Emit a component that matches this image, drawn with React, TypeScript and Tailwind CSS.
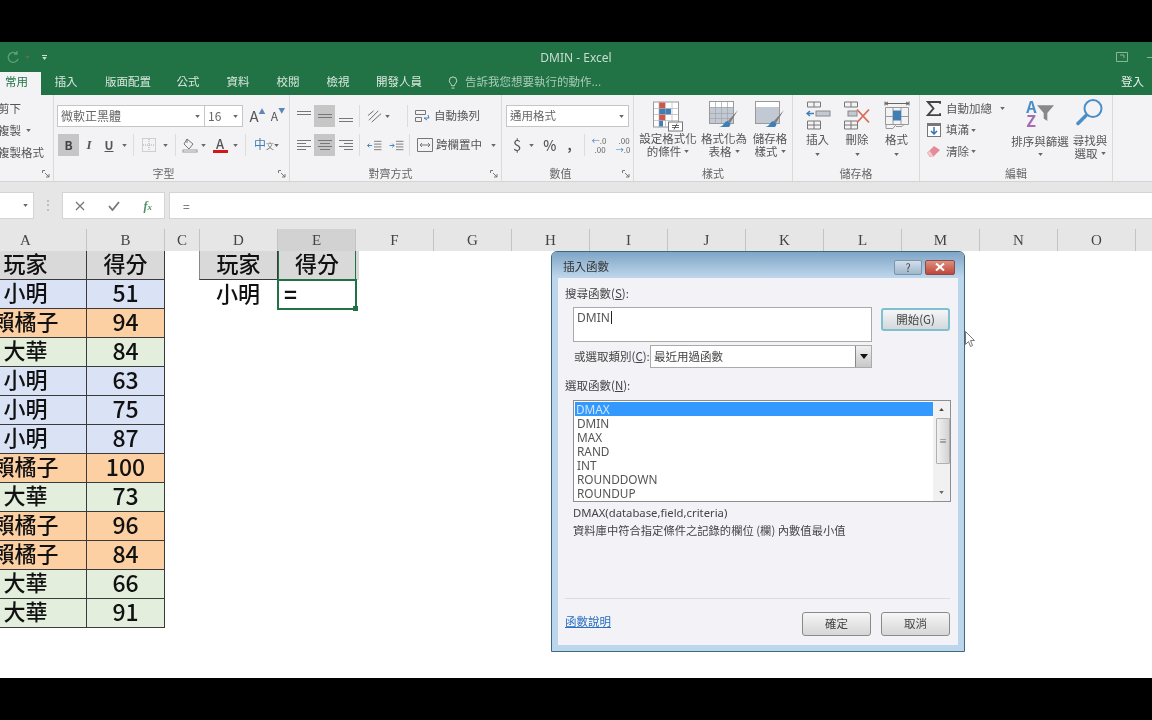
import type { ReactNode } from "react";

const CJK = "font-['Noto_Sans_CJK_TC','Noto_Sans','Liberation_Sans',sans-serif]";

const tabs = [
  { label: "插入", w: "w-[50px]" },
  { label: "版面配置", w: "w-[74px]" },
  { label: "公式", w: "w-[46px]" },
  { label: "資料", w: "w-[54px]" },
  { label: "校閱", w: "w-[46px]" },
  { label: "檢視", w: "w-[54px]" },
  { label: "開發人員", w: "w-[68px]" },
];

const columns = [
  { name: "A", w: "w-[122px]" },
  { name: "B", w: "w-[78px]" },
  { name: "C", w: "w-[35px]" },
  { name: "D", w: "w-[78px]" },
  { name: "E", w: "w-[78px]" },
  { name: "F", w: "w-[78px]" },
  { name: "G", w: "w-[78px]" },
  { name: "H", w: "w-[78px]" },
  { name: "I", w: "w-[78px]" },
  { name: "J", w: "w-[78px]" },
  { name: "K", w: "w-[78px]" },
  { name: "L", w: "w-[78px]" },
  { name: "M", w: "w-[78px]" },
  { name: "N", w: "w-[78px]" },
  { name: "O", w: "w-[78px]" },
  { name: "", w: "w-[78px]" },
];

const rows: [string, number][] = [
  ["小明", 51],
  ["賴橘子", 94],
  ["大華", 84],
  ["小明", 63],
  ["小明", 75],
  ["小明", 87],
  ["賴橘子", 100],
  ["大華", 73],
  ["賴橘子", 96],
  ["賴橘子", 84],
  ["大華", 66],
  ["大華", 91],
];

const rowColor: Record<string, string> = {
  小明: "bg-[#dae3f5]",
  賴橘子: "bg-[#fcd0a2]",
  大華: "bg-[#e3eedc]",
};

const functions = ["DMIN", "MAX", "RAND", "INT", "ROUNDDOWN", "ROUNDUP"];

function Caret({ className = "" }: { className?: string }) {
  return (
    <svg viewBox="0 0 6 4" className={`h-[3px] w-[5px] shrink-0 fill-[#666] ${className}`}>
      <path d="M0 0h6L3 4z" />
    </svg>
  );
}

function Sep() {
  return <div className="h-[22px] w-px shrink-0 bg-[#dcdcdc]" />;
}

function Launcher() {
  return (
    <svg viewBox="0 0 8 8" className="absolute bottom-[3px] right-[3px] h-2 w-2 fill-none stroke-[#777]">
      <path d="M.5 3V.5H3M3 3l4 4M4 7h3V4" />
    </svg>
  );
}

function Group({
  w,
  label,
  labelClass = "",
  launcher,
  children,
}: {
  w: string;
  label: string;
  labelClass?: string;
  launcher?: boolean;
  children?: ReactNode;
}) {
  return (
    <div className={`relative flex h-full shrink-0 flex-col border-r border-[#dadada] ${w}`}>
      <div className="h-[70px] overflow-hidden">{children}</div>
      <div className={`text-center text-[11px] leading-[16px] text-[#666] ${labelClass}`}>{label}</div>
      {launcher && <Launcher />}
    </div>
  );
}

function AlignIcon({ lines, active }: { lines: string; active?: boolean }) {
  return (
    <div className={`flex h-[22px] w-[21px] shrink-0 items-center justify-center ${active ? "bg-[#c6c6c6]" : ""}`}>
      <svg viewBox="0 0 14 14" className="h-[14px] w-[14px] fill-none stroke-[#777]">
        <path d={lines} />
      </svg>
    </div>
  );
}

function BigIcon({ children, top, bottom, w }: { children: ReactNode; top: string; bottom: string; w: string }) {
  return (
    <div className={`flex shrink-0 flex-col items-center ${w}`}>
      <div className="flex h-[32px] items-center justify-center">{children}</div>
      <div className="whitespace-nowrap text-center text-[11.5px] leading-[13px] text-[#555]">
        <div>{top}</div>
        <div className="flex h-[13px] items-center justify-center gap-[3px]">
          {bottom}
          <Caret />
        </div>
      </div>
    </div>
  );
}

function CellStyleGrid({ fill }: { fill: boolean }) {
  return (
    <svg viewBox="0 0 30 30" className="h-[30px] w-[30px] fill-none">
      <rect x=".5" y=".5" width="24" height="22" fill="#fff" stroke="#999" />
      <rect x="1" y="6" width="23" height="16" fill="#c3c9d3" />
      {fill && <path d="M6.5 1v22M12.5 1v22M18.5 1v22M1 6.5h24M1 12.5h24M1 17.5h24" stroke="#a0a4aa" strokeWidth=".7" />}
      <path d="M29 9 19 20l2 2z" fill="#7d7d7d" />
      <path d="M19 20c-3 0-4 3-5 4-1 1-3 2-4 2h10c1-1 2-3 1-4z" fill="#3f7fb5" />
    </svg>
  );
}

function SmallCells() {
  return (
    <g className="fill-none stroke-[#777]">
      <path d="M2.5 1.5h13v5h-13zM9 1.5v5M2.5 20.5h13v8h-13zM9 20.5v8M2.5 24.5h13" />
    </g>
  );
}

function Ribbon() {
  return (
    <div className="flex h-[87px] shrink-0 border-b border-[#d4d4d4] bg-[#f3f3f5]">
      <Group w="w-[54px]" label="" launcher>
        <div className="-ml-[2px] flex flex-col whitespace-nowrap pt-[2px] text-[11.5px] leading-[22px] text-[#555]">
          <div>剪下</div>
          <div className="flex items-center gap-[5px]">
            複製
            <Caret />
          </div>
          <div>複製格式</div>
        </div>
      </Group>
      <Group w="w-[236px]" label="字型" labelClass="pr-[16px]" launcher>
        <div className="flex flex-col gap-[7px] pt-[10px]">
          <div className="flex h-[22px] items-center pl-[3px]">
            <div className="flex h-[22px] w-[148px] shrink-0 items-center justify-between border border-[#c6c6c6] bg-white pl-[3px] pr-[4px] text-[12px] text-[#666]">
              微軟正黑體
              <Caret />
            </div>
            <div className="flex h-[22px] w-[38px] shrink-0 items-center justify-between border border-l-0 border-[#c6c6c6] bg-white pl-[3px] pr-[4px] text-[12px] text-[#666]">
              16
              <Caret />
            </div>
            <div className="ml-[4px] flex w-[21px] shrink-0 items-start justify-center text-[15px] leading-[18px] text-[#555]">
              A<span className="text-[7px] leading-[8px] text-[#5b87b8]">▲</span>
            </div>
            <div className="flex w-[20px] shrink-0 items-start justify-center text-[12px] leading-[20px] text-[#555]">
              A<span className="text-[7px] leading-[8px] text-[#5b87b8]">▼</span>
            </div>
          </div>
          <div className="flex h-[22px] items-center pl-[4px]">
            <div className="flex h-[22px] w-[21px] items-center justify-center bg-[#c6c6c6] text-[12px] font-bold text-[#444]">B</div>
            <div className="flex w-[20px] justify-center font-['Liberation_Serif',serif] text-[13px] font-bold italic text-[#555]">I</div>
            <div className="flex w-[20px] justify-center text-[12px] font-bold text-[#555] underline">U</div>
            <Caret className="ml-[3px]" />
            <div className="ml-[6px]"><Sep /></div>
            <svg viewBox="0 0 14 14" className="ml-[8px] h-[14px] w-[14px] fill-none stroke-[#aaa] [stroke-dasharray:1_1]">
              <path d="M.5.5h13v13H.5zM7 1v12M1 7h12" />
            </svg>
            <Caret className="ml-[7px]" />
            <div className="ml-[7px]"><Sep /></div>
            <svg viewBox="0 0 16 16" className="ml-[6px] h-[16px] w-[16px] fill-none stroke-[#777]">
              <path d="M5 2l6 5-4 5-5-5zM5 2v4" />
              <rect x="1" y="13" width="14" height="2" fill="#fff" stroke="#999" />
            </svg>
            <Caret className="ml-[3px]" />
            <div className="ml-[6px] flex w-[16px] flex-col items-center">
              <span className="text-[13px] font-medium leading-[13px] text-[#555]">A</span>
              <span className="h-[3px] w-[15px] bg-[#d01818]" />
            </div>
            <Caret className="ml-[5px]" />
            <div className="ml-[7px]"><Sep /></div>
            <div className="ml-[8px] w-[20px] whitespace-nowrap text-[12px] leading-[16px] text-[#3f7fb5]">
              中<span className="text-[8px] text-[#777]">文</span>
            </div>
            <Caret />
          </div>
        </div>
      </Group>
      <Group w="w-[212px]" label="對齊方式" labelClass="pr-[10px]" launcher>
        <div className="flex flex-col gap-[7px] pt-[10px]">
          <div className="flex h-[22px] items-center pl-[3px]">
            <AlignIcon lines="M0 2.5h14M0 5.5h14" />
            <AlignIcon lines="M0 5.5h14M0 8.5h14" active />
            <AlignIcon lines="M0 9.5h14M0 12.5h14" />
            <div className="ml-[3px]"><Sep /></div>
            <svg viewBox="0 0 16 16" className="ml-[7px] h-[15px] w-[15px] fill-none stroke-[#666]">
              <path d="M2 12 12 2M5 14 15 5M1 7l6-5" />
            </svg>
            <Caret className="ml-[3px]" />
            <div className="ml-[17px]"><Sep /></div>
            <svg viewBox="0 0 16 14" className="ml-[7px] h-[14px] w-[16px] fill-none stroke-[#777]">
              <path d="M.5 1.5h10v4H.5zM.5 8.5h6v4h-6z" />
              <path d="M9 9h5l-1-3M12 11l-3-2" stroke="#3f7fb5" />
            </svg>
            <span className="ml-[3px] whitespace-nowrap text-[11.5px] text-[#555]">自動換列</span>
          </div>
          <div className="flex h-[22px] items-center pl-[3px]">
            <AlignIcon lines="M0 2.5h14M0 5.5h9M0 8.5h14M0 11.5h9" />
            <AlignIcon lines="M0 2.5h14M2 5.5h10M0 8.5h14M2 11.5h10" active />
            <AlignIcon lines="M0 2.5h14M5 5.5h9M0 8.5h14M5 11.5h9" />
            <div className="ml-[3px]"><Sep /></div>
            <svg viewBox="0 0 16 14" className="ml-[6px] h-[13px] w-[16px] fill-none stroke-[#777]">
              <path d="M8 2.5h8M8 5.5h8M8 8.5h8M8 11.5h8" />
              <path d="M6 7H1M3 5 1 7l2 2" stroke="#3f7fb5" />
            </svg>
            <svg viewBox="0 0 16 14" className="ml-[6px] h-[13px] w-[16px] fill-none stroke-[#777]">
              <path d="M8 2.5h8M8 5.5h8M8 8.5h8M8 11.5h8" />
              <path d="M1 7h5M4 5l2 2-2 2" stroke="#3f7fb5" />
            </svg>
            <div className="ml-[5px]"><Sep /></div>
            <svg viewBox="0 0 16 14" className="ml-[7px] h-[14px] w-[16px] fill-none stroke-[#777]">
              <path d="M.5.5h15v13H.5zM3 7h10M5 5 3 7l2 2M11 5l2 2-2 2" />
            </svg>
            <span className="ml-[3px] whitespace-nowrap text-[11.5px] text-[#555]">跨欄置中</span>
            <Caret className="ml-[9px]" />
          </div>
        </div>
      </Group>
      <Group w="w-[132px]" label="數值" labelClass="pr-[14px]" launcher>
        <div className="flex flex-col gap-[7px] pt-[10px]">
          <div className="flex h-[22px] pl-[4px]">
            <div className="flex h-[22px] w-[123px] items-center justify-between border border-[#c6c6c6] bg-white pl-[3px] pr-[4px] text-[11.5px] text-[#666]">
              通用格式
              <Caret />
            </div>
          </div>
          <div className="flex h-[22px] items-center pl-[11px] text-[#555]">
            <span className="text-[15px]">$</span>
            <Caret className="ml-[8px]" />
            <span className="ml-[9px] text-[14px] font-medium">%</span>
            <span className="ml-[11px] text-[13px] font-bold">,</span>
            <div className="ml-[12px]"><Sep /></div>
            <div className="ml-[7px] w-[14px] text-right text-[8px] leading-[9px] text-[#666]">
              <div><span className="text-[#3f7fb5]">←</span>.0</div>
              <div>.00</div>
            </div>
            <div className="ml-[10px] w-[14px] text-right text-[8px] leading-[9px] text-[#666]">
              <div>.00</div>
              <div><span className="text-[#3f7fb5]">→</span>.0</div>
            </div>
          </div>
        </div>
      </Group>
      <Group w="w-[159px]" label="樣式">
        <div className="flex pl-[3px] pt-[5px]">
          <BigIcon w="w-[62px]" top="設定格式化" bottom="的條件">
            <svg viewBox="0 0 30 30" className="h-[31px] w-[30px] fill-none">
              <rect x=".5" y=".5" width="25" height="25" fill="#fff" stroke="#999" />
              <rect x="6" y="1" width="6" height="6" fill="#d0574a" />
              <rect x="6" y="7" width="12" height="6" fill="#3f7fb5" />
              <rect x="6" y="13" width="6" height="6" fill="#d0574a" />
              <rect x="6" y="19" width="4" height="6" fill="#3f7fb5" />
              <path d="M6 1v25M12.5 1v25M19 1v25M1 7h25M1 13h25M1 19h25" stroke="#aaa" strokeWidth=".6" />
              <rect x="15.5" y="20.5" width="14" height="9" fill="#fff" stroke="#777" />
              <path d="M19 24h7M19 26h7M24 22l-3 6" stroke="#444" strokeWidth=".8" />
            </svg>
          </BigIcon>
          <BigIcon w="w-[50px]" top="格式化為" bottom="表格">
            <CellStyleGrid fill />
          </BigIcon>
          <BigIcon w="w-[42px]" top="儲存格" bottom="樣式">
            <CellStyleGrid fill={false} />
          </BigIcon>
        </div>
      </Group>
      <Group w="w-[127px]" label="儲存格">
        <div className="flex pl-[5px] pt-[5px]">
          <div className="flex w-[39px] flex-col items-center">
            <svg viewBox="0 0 26 30" className="h-[31px] w-[26px] fill-none">
              <SmallCells />
              <rect x="11" y="10.5" width="14" height="5" fill="#c3c9d3" stroke="#888" />
              <path d="M2 13h7M5 10.500 2 13l3 2.500" stroke="#3f7fb5" strokeWidth="1.400" />
            </svg>
            <div className="mt-[1px] text-[11.5px] leading-[14px] text-[#555]">插入</div>
            <Caret className="mt-[7px]" />
          </div>
          <div className="flex w-[40px] flex-col items-center">
            <svg viewBox="0 0 30 30" className="h-[31px] w-[30px] fill-none">
              <SmallCells />
              <rect x="6" y="10.5" width="9" height="5" fill="#c3c9d3" stroke="#888" />
              <path d="m15 9 12 13M27 9 15 22" stroke="#d96b57" strokeWidth="1.800" />
            </svg>
            <div className="mt-[1px] text-[11.5px] leading-[14px] text-[#555]">刪除</div>
            <Caret className="mt-[7px]" />
          </div>
          <div className="flex w-[39px] flex-col items-center">
            <svg viewBox="0 0 26 30" className="h-[31px] w-[26px] fill-none">
              <path d="M1 3h24M1 1v4M25 1v4M4 1.500 1 3l3 1.500M22 1.500 25 3l-3 1.500" stroke="#666" />
              <path d="M1.500 7h23v17h-23zM9 7v17M17 7v17M1.500 16h23" stroke="#999" />
              <rect x="9" y="10" width="8" height="10" fill="#3f7fb5" />
              <path d="M2 24v4h7l3-4M12 26h6l2-2" stroke="#999" />
            </svg>
            <div className="mt-[1px] text-[11.5px] leading-[14px] text-[#555]">格式</div>
            <Caret className="mt-[7px]" />
          </div>
        </div>
      </Group>
      <Group w="w-[193px]" label="編輯">
        <div className="flex pt-[3px]">
          <div className="flex w-[91px] shrink-0 flex-col pl-[6px] text-[11.5px] text-[#555]">
            <div className="flex h-[21px] items-center">
              <svg viewBox="0 0 16 16" className="h-[15px] w-[15px] fill-none stroke-[#444]">
                <path d="M15 3V1H2l6 7-6 7h13v-2" strokeWidth="2" />
              </svg>
              <span className="ml-[5px] whitespace-nowrap">自動加總</span>
              <Caret className="ml-[8px]" />
            </div>
            <div className="flex h-[22px] items-center">
              <svg viewBox="0 0 14 14" className="ml-[1px] h-[14px] w-[14px] fill-white stroke-[#777]">
                <rect x=".5" y=".5" width="13" height="13" />
                <path d="M.5.5h13v2H.5z" fill="#777" />
                <path d="M7 4v7M4 8l3 3 3-3" stroke="#2f75b5" strokeWidth="1.500" fill="none" />
              </svg>
              <span className="ml-[5px] whitespace-nowrap">填滿</span>
              <Caret className="ml-[2px]" />
            </div>
            <div className="flex h-[21px] items-center">
              <svg viewBox="0 0 15 13" className="h-[13px] w-[15px]">
                <path d="M1 8 8 1l6 4-7 7H4z" fill="#e58a97" />
                <path d="M1 8l4 4h3L4 6z" fill="#f4c8ce" />
              </svg>
              <span className="ml-[5px] whitespace-nowrap">清除</span>
              <Caret className="ml-[2px]" />
            </div>
          </div>
          <div className="flex w-[58px] shrink-0 flex-col items-center">
            <div className="flex h-[29px] items-center">
              <div className="flex flex-col text-[16px] font-bold leading-[14px]">
                <span className="text-[#4a8ec9]">A</span>
                <span className="text-[#a66cb4]">Z</span>
              </div>
              <svg viewBox="0 0 14 14" className="h-[17px] w-[17px] fill-[#888]">
                <path d="M0 1h14L8.500 7.500V14l-3-2V7.500z" />
              </svg>
            </div>
            <div className="mt-[7px] whitespace-nowrap text-[11.5px] leading-[14px] text-[#555]">排序與篩選</div>
            <Caret className="mt-[5px]" />
          </div>
          <div className="flex w-[42px] shrink-0 flex-col items-center">
            <svg viewBox="0 0 28 28" className="h-[29px] w-[28px] shrink-0 fill-none">
              <circle cx="17" cy="10" r="8.500" stroke="#4a8ec9" strokeWidth="2" />
              <path d="M10 17 2 25" stroke="#4a8ec9" strokeWidth="3.500" strokeLinecap="round" />
            </svg>
            <div className="mt-[7px] whitespace-nowrap text-center text-[11.5px] leading-[13px] text-[#555]">
              尋找與
              <div className="flex items-center justify-center gap-[3px]">
                選取
                <Caret />
              </div>
            </div>
          </div>
        </div>
      </Group>
    </div>
  );
}

function FormulaBar() {
  return (
    <div className="flex h-[47px] shrink-0 gap-[4px] bg-[#e6e6e6] pt-[10px] pb-[10px]">
      <div className="flex h-[27px] w-[34px] shrink-0 items-center justify-end border border-l-0 border-[#d4d4d4] bg-white pr-[5px]">
        <Caret />
      </div>
      <div className="flex w-[20px] shrink-0 justify-center pt-[6px] text-[12px] leading-[12px] text-[#aaa]">⋮</div>
      <div className="flex h-[27px] w-[103px] shrink-0 items-center justify-between border border-[#d4d4d4] bg-white px-[12px]">
        <svg viewBox="0 0 10 10" className="h-[10px] w-[10px] fill-none stroke-[#777]">
          <path d="m1 1 8 8M9 1 1 9" strokeWidth="1.300" />
        </svg>
        <svg viewBox="0 0 12 10" className="h-[10px] w-[12px] fill-none stroke-[#777]">
          <path d="m1 5 3.500 4L11 1" strokeWidth="1.800" />
        </svg>
        <span className="font-['Liberation_Serif',serif] text-[12px] font-bold italic text-[#4f8f6a]">
          f<span className="text-[9px]">x</span>
        </span>
      </div>
      <div className="flex h-[27px] flex-1 items-center border border-r-0 border-[#d4d4d4] bg-white pl-[13px] text-[12px] text-[#555]">=</div>
    </div>
  );
}

function Sheet() {
  const cell = "flex h-[29px] items-center justify-center border-b border-r border-[#3a3a3a]";
  return (
    <div className={`flex flex-1 -ml-[35px] items-start bg-white text-[22px] font-medium text-[#111] ${CJK}`}>
      <div className="w-[200px] shrink-0">
        <div className="flex bg-[#d9d9d9]">
          <div className={`${cell} w-[122px] pb-[5px]`}>玩家</div>
          <div className={`${cell} w-[78px] pb-[5px]`}>得分</div>
        </div>
        {rows.map(([name, score], i) => (
          <div key={i} className={`flex ${rowColor[name]}`}>
            <div className={`${cell} w-[122px] pb-[5px]`}>{name}</div>
            <div className={`${cell} w-[78px] pb-[3px] text-[23px]`}>{score}</div>
          </div>
        ))}
      </div>
      <div className="ml-[34px] w-[160px] shrink-0">
        <div className="flex bg-[#d9d9d9]">
          <div className={`${cell} w-[79px] border-l border-l-[#888] pb-[5px]`}>玩家</div>
          <div className="flex h-[29px] w-[78px] items-center justify-center border border-t-0 border-[#217346] pb-[5px]">得分</div>
        </div>
        <div className="flex">
          <div className="flex h-[29px] w-[78px] items-center justify-center pb-[5px]">小明</div>
          <div className="relative -mt-px flex h-[31px] w-[80px] items-center border-2 border-[#217346] pb-[3px] pl-[5px] font-bold">
            =
            <span className="absolute -bottom-[3px] -right-[3px] h-[5px] w-[5px] bg-[#217346]" />
          </div>
        </div>
      </div>
    </div>
  );
}

function DialogButton({ children }: { children: ReactNode }) {
  return (
    <button className="h-[24px] w-[69px] rounded-[3px] border border-[#8a8a8a] bg-gradient-to-b from-[#f6f6f6] to-[#d6d6d6] text-[11.5px] text-[#444]">
      {children}
    </button>
  );
}

function Dialog() {
  return (
    <div className={`absolute left-[551px] top-[209px] flex h-[401px] w-[414px] flex-col rounded-t-[6px] border border-[#3f6a7d] bg-[#bcd6ec] px-[6px] pb-[6px] text-[#444] ${CJK}`}>
      <div className="-mx-[6px] flex h-[26px] shrink-0 items-center justify-between rounded-t-[5px] bg-gradient-to-b from-[#7fa5c6] to-[#bfd7ec] pl-[11px] pr-[9px] pt-[4px] text-[11.5px] text-[#333]">
        插入函數
        <div className="flex items-center gap-[3px]">
          <div className="flex h-[15px] w-[28px] items-center justify-center rounded-[2px] border border-[#7c93a8] bg-gradient-to-b from-[#d2dfea] to-[#9fb7cc] text-[11px] text-[#444]">?</div>
          <div className="flex h-[15px] w-[30px] items-center justify-center rounded-[2px] border border-[#8a4b4b] bg-gradient-to-b from-[#dd8f7e] to-[#c0453a]">
            <svg viewBox="0 0 10 8" className="h-[8px] w-[10px] fill-none stroke-white">
              <path d="m1 .5 8 7M9 .5l-8 7" strokeWidth="2" />
            </svg>
          </div>
        </div>
      </div>
      <div className="flex flex-1 flex-col bg-[#f3f2f7] pl-[7px] pr-[7px] text-[11.5px]">
        <div className="mt-[7px] h-[16px] leading-[16px]">搜尋函數(<u>S</u>):</div>
        <div className="mt-[6px] flex items-start">
          <div className="ml-[8px] h-[35px] w-[299px] border border-[#aaa] bg-white pl-[3px] pt-[1px] font-['Noto_Sans',sans-serif] text-[12px] leading-[18px] text-[#555]">
            DMIN<span className="ml-[1px] inline-block h-[13px] w-px bg-[#222] align-[-2px]" />
          </div>
          <div className="ml-[9px] mt-[1px] flex h-[23px] w-[69px] items-center justify-center rounded-[3px] border-2 border-[#7fc0cf] bg-gradient-to-b from-[#f5f6f7] to-[#d4d8dc]">
            開始(G)
          </div>
        </div>
        <div className="mt-[3px] flex h-[23px] items-center pl-[9px]">
          <span className="w-[76px] whitespace-nowrap">或選取類別(<u>C</u>):</span>
          <div className="flex h-[23px] w-[222px] items-center justify-between border border-[#aaa] bg-white pl-[3px]">
            最近用過函數
            <div className="flex h-full w-[16px] items-center justify-center border-l border-[#888] bg-gradient-to-b from-[#f0f0f0] to-[#c8c8c8]">
              <svg viewBox="0 0 8 5" className="h-[5px] w-[8px] fill-[#111]"><path d="M0 0h8L4 5z" /></svg>
            </div>
          </div>
        </div>
        <div className="mt-[9px] h-[16px] leading-[16px]">選取函數(<u>N</u>):</div>
        <div className="ml-[8px] mt-[7px] flex h-[102px] w-[378px] border border-[#8a8f96] bg-white font-['Noto_Sans',sans-serif] text-[11.8px] leading-[14px] text-[#555]">
          <div className="flex-1 pl-[1px] pt-[1px]">
            <div className="h-[14px] bg-[#3399ff] pl-[1px] text-[#cfe6fb]">DMAX</div>
            {functions.map((f) => (
              <div key={f} className="h-[14px] pl-[2px]">{f}</div>
            ))}
          </div>
          <div className="flex w-[17px] flex-col items-center justify-between bg-[#f1f1f1] py-[7px]">
            <svg viewBox="0 0 6 4" className="h-[3px] w-[5px] fill-[#444]"><path d="M0 4h6L3 0z" /></svg>
            <Caret className="fill-[#444]" />
          </div>
        </div>
        <div className="ml-[8px] mt-[3px] h-[16px] font-['Noto_Sans',sans-serif] text-[11.3px] leading-[16px] text-[#444]">DMAX(database,field,criteria)</div>
        <div className="ml-[8px] mt-[1px] h-[16px] whitespace-nowrap text-[11.3px] leading-[16px]">資料庫中符合指定條件之記錄的欄位 (欄) 內數值最小值</div>
        <div className="mt-[60px] h-px w-[385px] bg-[#dcdcdc]" />
        <div className="mt-[13px] flex items-start justify-between pr-[1px]">
          <a className="mt-[1px] text-[11.5px] leading-[16px] text-[#2a6fc0] underline">函數說明</a>
          <div className="flex gap-[10px]">
            <DialogButton>確定</DialogButton>
            <DialogButton>取消</DialogButton>
          </div>
        </div>
      </div>
      <div className="absolute left-[384px] top-[166px] flex h-[46px] w-[14px] items-center justify-center rounded-[1px] border border-[#b0b0b0] bg-gradient-to-r from-[#f2f2f2] to-[#d2d2d2] text-[8px] text-[#666]">≡</div>
    </div>
  );
}

export default function App() {
  return (
    <div className={`h-[720px] w-[1152px] overflow-hidden bg-black py-[42px] blur-[0.35px] ${CJK}`}>
      <div className="relative flex h-[636px] flex-col overflow-hidden bg-white">
        <div className="flex h-[30px] shrink-0 items-center bg-[#217346] pl-[6px]">
          <svg viewBox="0 0 14 12" className="h-[12px] w-[14px] fill-none stroke-[#5f9f7e]">
            <path d="M11 3A5 5 0 1 0 12 8M11 0v3H8" strokeWidth="1.300" />
          </svg>
          <Caret className="ml-[5px] fill-[#5f9f7e]" />
          <div className="ml-[12px] flex flex-col items-center gap-px">
            <span className="h-px w-[5px] bg-[#cde0d4]" />
            <Caret className="fill-[#cde0d4]" />
          </div>
          <div className="flex-1 pr-[11px] pt-[1px] text-center font-['Noto_Sans',sans-serif] text-[12px] text-[#c9ddd0]">DMIN - Excel</div>
          <svg viewBox="0 0 12 10" className="h-[10px] w-[12px] fill-none stroke-[#8ab59b]">
            <path d="M.5.5h11v9H.5zM4 3h4v3" />
          </svg>
          <span className="ml-[19px] h-px w-[5px] bg-[#8ab59b]" />
        </div>
        <div className="flex h-[23px] shrink-0 items-center bg-[#217346] text-[11.5px] text-[#d9e8de]">
          <div className="flex h-full w-[41px] items-center justify-center bg-[#f3f3f5] pb-[3px] pr-[8px] text-[#217346]">常用</div>
          {tabs.map((t) => (
            <div key={t.label} className={`pb-[3px] text-center ${t.w}`}>{t.label}</div>
          ))}
          <svg viewBox="0 0 10 14" className="mb-[3px] ml-[15px] h-[13px] w-[10px] fill-none stroke-[#cfe0d5]">
            <path d="M3.500 13h3M3.500 10.500c0-2-2.500-3-2.500-5.500a4 4 0 0 1 8 0c0 2.500-2.500 3.500-2.500 5.500z" />
          </svg>
          <span className="ml-[7px] pb-[3px] text-[#a9cbb6]">告訴我您想要執行的動作...</span>
          <span className="ml-auto pb-[3px] pr-[8px] text-[#e7f0ea]">登入</span>
        </div>
        <Ribbon />
        <FormulaBar />
        <div className="-ml-[35px] flex h-[22px] shrink-0 bg-[#e6e6e6] font-['Liberation_Serif',serif] text-[15px] text-[#444]">
          {columns.map((c) => (
            <div
              key={c.name}
              className={`flex h-full shrink-0 items-center justify-center border-r border-[#c4c4c4] ${c.w} ${c.name === "E" ? "bg-[#d2d2d2]" : ""}`}
            >
              {c.name}
            </div>
          ))}
        </div>
        <Sheet />
        <Dialog />
        <svg viewBox="0 0 11 17" className="absolute left-[965px] top-[289px] h-[17px] w-[11px] fill-white stroke-[#777]">
          <path d="M.5.5v13l3-3 2 5 2-1-2-5h4z" />
        </svg>
      </div>
    </div>
  );
}
